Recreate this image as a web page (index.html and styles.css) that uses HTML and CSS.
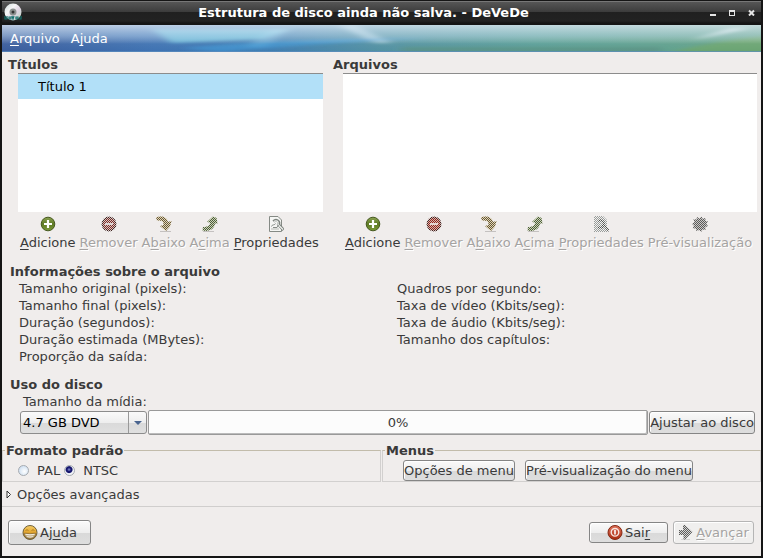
FILE: index.html
```html
<!DOCTYPE html>
<html lang="pt-BR">
<head>
<meta charset="utf-8">
<title>Estrutura de disco ainda não salva. - DeVeDe</title>
<link rel="stylesheet" href="styles.css">
</head>
<body>
<svg class="defs" aria-hidden="true">
  <defs>
    <linearGradient id="olive" x2="0" y2="1"><stop offset="0" stop-color="#8ba252"/><stop offset=".5" stop-color="#5e7a24"/><stop offset="1" stop-color="#7c9a38"/></linearGradient>
    <linearGradient id="red" x2="0" y2="1"><stop offset="0" stop-color="#df725b"/><stop offset="1" stop-color="#a92c10"/></linearGradient>
    <linearGradient id="gold" x2="0" y2="1"><stop offset="0" stop-color="#f6cf6a"/><stop offset=".5" stop-color="#e0a32c"/><stop offset="1" stop-color="#7c6434"/></linearGradient>
    <linearGradient id="disc" x2="1" y2="1"><stop offset="0" stop-color="#c9d6d6"/><stop offset=".35" stop-color="#f7f7f7"/><stop offset=".6" stop-color="#e2d5e4"/><stop offset="1" stop-color="#b5d9c0"/></linearGradient>
    <pattern id="dots" width="2" height="2" patternUnits="userSpaceOnUse"><path d="M0 0h1v1H0zM1 1h1v1H1z" fill="#fff"/></pattern>
    <mask id="stipple" maskUnits="userSpaceOnUse" x="0" y="0" width="16" height="16"><rect width="16" height="16" fill="url(#dots)"/></mask>
    <symbol id="add" viewBox="0 0 16 16"><circle cx="8" cy="8" r="6.8" fill="url(#olive)" stroke="#46591f"/><path d="M8 4v8M4 8h8" stroke="#fff" stroke-width="2.2"/></symbol>
    <symbol id="remove" viewBox="0 0 16 16"><circle cx="8" cy="8" r="7.2" fill="#d8c6c4"/><g mask="url(#stipple)"><circle cx="8" cy="8" r="7.5" fill="#3e2624"/><circle cx="8" cy="8" r="6" fill="#7e2b25"/></g><path d="M4 8h8" stroke="#ddd5d4" stroke-width="2"/></symbol>
    <symbol id="remove-red" viewBox="0 0 16 16"><circle cx="8" cy="8" r="7.2" fill="#d8b4ae"/><g mask="url(#stipple)"><circle cx="8" cy="8" r="7.500" fill="#3e2624"/><circle cx="8" cy="8" r="6" fill="#90251b"/></g><path d="M4 8h8" stroke="#e4d5d2" stroke-width="2"/></symbol>
    <symbol id="down" viewBox="0 0 16 16"><path d="M4 15.500h11" stroke="#c4c1c0"/><path d="M0 1.500C5-.8 11 .8 12 6l3.500-1L14 10.500 10 15 4 10l3.500-1C8 5 5 4 1 4.500z" fill="#e3d7b5"/><path d="M0 1.500C5-.8 11 .8 12 6l3.500-1L14 10.500 10 15 4 10l3.500-1C8 5 5 4 1 4.500z" fill="#65573a" mask="url(#stipple)"/></symbol>
    <symbol id="up" viewBox="0 0 16 16"><path d="M1 15.500h11" stroke="#c4c1c0"/><path d="M.5 14.500C7 16 12.500 13 13 7.500h2.500L14.500 2 11 .500 5 6l3 .5C8 10 5 11 1 11z" fill="#cbd6b6"/><path d="M.5 14.500C7 16 12.500 13 13 7.500h2.500L14.500 2 11 .500 5 6l3 .5C8 10 5 11 1 11z" fill="#4d5a3b" mask="url(#stipple)"/></symbol>
    <symbol id="props" viewBox="0 0 16 16"><path d="M1.500.5H10L13.500 4v11.500h-12z" fill="#f5f6f4" stroke="#858a85"/><path d="M3 13h8" stroke="#d6d8d4" stroke-width="2"/><path d="M5.500 5.500C8 3 12 5 10.500 8.500L15.500 14" fill="none" stroke="#7d837e" stroke-width="3"/><path d="M6 5.500C8 4 11 5 10 8.500l5 5" fill="none" stroke="#eff1ee" stroke-width="1.200"/><path d="M3.500 10.500C4 8 7 9.500 7.500 7.500M5 11.500h4L10.500 9" fill="none" stroke="#858b86"/></symbol>
    <symbol id="props-off" viewBox="0 0 16 16"><path d="M1 0h9l4 4v12H1z" fill="#f1f1f0"/><g mask="url(#stipple)"><path d="M1 0h9l4 4v12H1z" fill="#9a9c9a"/><path d="M5.500 5.500C8 3 12 5 10.500 8.500L16 15M5 11.500h4L10.500 9" fill="none" stroke="#4d504d" stroke-width="2"/></g></symbol>
    <symbol id="gear" viewBox="0 0 16 16"><path d="M5 1l2.200 1.500L9.500.5l1 2.200 3-.7-.2 2.800 2.700.7-1.700 2.300 1.700 2.400-2.700.8.2 2.900-2.900-.4-1.300 2.300-2.200-1.700L4.500 15l-.8-2.600-2.900-.1L2 9.700 0 7.700l2.400-1.500L1.500 3.300l3 .1z" fill="#cbcac9"/><path d="M5 1l2.200 1.500L9.500.5l1 2.200 3-.7-.2 2.800 2.700.7-1.700 2.300 1.700 2.400-2.700.8.2 2.900-2.900-.4-1.300 2.300-2.200-1.700L4.500 15l-.8-2.600-2.900-.1L2 9.700 0 7.700l2.400-1.500L1.500 3.300l3 .1z" fill="#5b5a58" mask="url(#stipple)"/></symbol>
    <symbol id="smile" viewBox="0 0 16 16"><circle cx="8" cy="7.500" r="7" fill="url(#gold)" stroke="#6f603d"/><path d="M2.500 8.200q5.500 1 11 0-.5 5-5.500 5t-5.500-5z" fill="#efe9dc" stroke="#8a6a2c" stroke-width=".8"/><path d="M3.500 10.500q4.500 1 9 0" fill="none" stroke="#a68c54" stroke-width=".7"/><path d="M3.500 5.500q1.500-1.500 3 0M9.500 5.500q1.500-1.500 3 0" fill="none" stroke="#b07d20"/></symbol>
    <symbol id="quit" viewBox="0 0 16 16"><circle cx="8" cy="7.500" r="7" fill="url(#red)" stroke="#842812"/><circle cx="8" cy="7.300" r="3.800" fill="none" stroke="#f7e5df" stroke-width="1.400"/><path d="M8 5v4.600" stroke="#fff" stroke-width="1.600"/></symbol>
    <symbol id="next" viewBox="0 0 16 16"><path d="M3 14.500h9" stroke="#d4d3d2"/><path d="M1 5h4V0h2l7.500 7L7 14.500H5.500V10H1z" fill="#d6d6d5"/><path d="M1 5h4V0h2l7.500 7L7 14.500H5.500V10H1z" fill="#5b5b5a" mask="url(#stipple)"/></symbol>
  </defs>
</svg>
<div class="window">
  <header class="titlebar">
    <svg class="logo" viewBox="0 0 18 18" aria-hidden="true"><circle cx="9" cy="9" r="8.500" fill="url(#disc)"/><circle cx="9" cy="9" r="3.500" fill="#8d9290"/><circle cx="9" cy="9" r="1.500" fill="#343434"/><path d="M1 13v3h2v-3M5 16h2v-2H5zM8 13l1 3 1-3M12 16h2v-2h-2zM15 16h2v-3" fill="none" stroke="#14716d" stroke-width="1.200"/></svg>
    <h1>Estrutura de disco ainda não salva. - DeVeDe</h1>
    <div class="controls">
      <button aria-label="Minimizar"><svg viewBox="0 0 7 7"><path d="M0 5h6v2H0z" fill="#e4e4e4"/></svg></button>
      <button aria-label="Maximizar"><svg viewBox="0 0 7 7"><path d="M0 1h6v6H0zM1 3v3h4V3z" fill="#e4e4e4" fill-rule="evenodd"/></svg></button>
      <button aria-label="Fechar"><svg viewBox="0 0 7 7"><path d="M1 1.500l5 5M6 1.500l-5 5" stroke="#e4e4e4" stroke-width="2"/></svg></button>
    </div>
  </header>
  <nav class="menubar">
    <svg class="waves" viewBox="0 0 760 27" preserveAspectRatio="none" aria-hidden="true">
      <defs>
        <linearGradient id="tone"><stop offset="0" stop-color="#3a5c9c"/><stop offset=".2" stop-color="#3e72b2"/><stop offset=".35" stop-color="#3f7cb0"/><stop offset=".5" stop-color="#5291a2"/><stop offset=".7" stop-color="#5a9e97"/><stop offset="1" stop-color="#64a287"/></linearGradient>
        <linearGradient id="sheen" x2="0" y2="1"><stop offset="0" stop-color="#e6eef8" stop-opacity=".75"/><stop offset=".4" stop-color="#d6e9f8" stop-opacity=".45"/><stop offset=".7" stop-color="#fff" stop-opacity=".05"/><stop offset="1" stop-color="#fff" stop-opacity="0"/></linearGradient>
        <filter id="soft" x="-10%" y="-50%" width="120%" height="200%"><feGaussianBlur stdDeviation="5 1.500"/></filter>
      </defs>
      <path d="M0 0h760v27H0z" fill="url(#tone)"/>
      <g filter="url(#soft)">
        <path d="M150 4h140l-30 10-90 4z" fill="#7ad8ea" opacity=".6"/>
        <path d="M270 4h18l-24 18h-20z" fill="#9ad9f2" opacity=".35"/>
        <path d="M336 0h18l36 18h-16z" fill="#e2f3fb" opacity=".5"/>
        <path d="M180 23Q300 12 430 13 320 18 220 27z" fill="#3f9bd8" opacity=".6"/>
        <path d="M400 22h260v5H400z" fill="#5a9082" opacity=".7"/>
        <path d="M690 15l60-12h-20z" fill="#fff" opacity=".7"/>
        <path d="M660 30Q700 18 770 10v20z" fill="#6ba472"/>
      </g>
      <path d="M0 0h760v27H0z" fill="url(#sheen)"/>
      <path d="M0 26.500h760" stroke="#5d8fc0" opacity=".7"/>
    </svg>
    <a href="#arquivo"><u>A</u>rquivo</a><a href="#ajuda">A<u>j</u>uda</a>
  </nav>
  <main>
    <div class="panes">
      <section class="pane">
        <h2>Títulos</h2>
        <ul class="list"><li>Título 1</li></ul>
        <div class="toolbar">
          <button><svg><use href="#add"/></svg><span><u>A</u>dicione</span></button>
          <button disabled><svg><use href="#remove"/></svg><span><u>R</u>emover</span></button>
          <button disabled><svg><use href="#down"/></svg><span>A<u>b</u>aixo</span></button>
          <button disabled><svg><use href="#up"/></svg><span>A<u>c</u>ima</span></button>
          <button><svg><use href="#props"/></svg><span><u>P</u>ropriedades</span></button>
        </div>
      </section>
      <section class="pane">
        <h2>Arquivos</h2>
        <ul class="list"></ul>
        <div class="toolbar">
          <button><svg><use href="#add"/></svg><span><u>A</u>dicione</span></button>
          <button disabled><svg><use href="#remove-red"/></svg><span><u>R</u>emover</span></button>
          <button disabled><svg><use href="#down"/></svg><span>A<u>b</u>aixo</span></button>
          <button disabled><svg><use href="#up"/></svg><span>A<u>c</u>ima</span></button>
          <button disabled><svg><use href="#props-off"/></svg><span><u>P</u>ropriedades</span></button>
          <button disabled><svg><use href="#gear"/></svg><span>Pré-visualização</span></button>
        </div>
      </section>
    </div>
    <section class="info">
      <h2>Informações sobre o arquivo</h2>
      <div class="facts">
        <ul><li>Tamanho original (pixels):</li><li>Tamanho final (pixels):</li><li>Duração (segundos):</li><li>Duração estimada (MBytes):</li><li>Proporção da saída:</li></ul>
        <ul><li>Quadros por segundo:</li><li>Taxa de vídeo (Kbits/seg):</li><li>Taxa de áudio (Kbits/seg):</li><li>Tamanho dos capítulos:</li></ul>
      </div>
    </section>
    <section class="usage">
      <h2>Uso do disco</h2>
      <label for="media">Tamanho da mídia:</label>
      <div class="usage-row">
        <div class="combo"><select id="media"><option>4.7 GB DVD</option></select></div>
        <div class="progress" role="progressbar" aria-label="Uso do disco" aria-valuenow="0">0%</div>
        <button class="btn">Ajustar ao disco</button>
      </div>
    </section>
    <div class="frames">
      <fieldset>
        <legend>Formato padrão</legend>
        <div class="radios">
          <input type="radio" name="format" id="pal"><label for="pal">PAL</label>
          <input type="radio" name="format" id="ntsc" checked><label for="ntsc">NTSC</label>
        </div>
      </fieldset>
      <fieldset>
        <legend>Menus</legend>
        <div class="menu-buttons">
          <button class="btn">Opções de menu</button>
          <button class="btn">Pré-visualização do menu</button>
        </div>
      </fieldset>
    </div>
    <details>
      <summary><svg class="arrow" viewBox="0 0 6 9" aria-hidden="true"><path d="M1 1v7l3.500-3.500z" fill="#fff" stroke="#333"/></svg>Opções avançadas</summary>
    </details>
    <footer>
      <button class="btn help"><svg><use href="#smile"/></svg><span>Aj<u>u</u>da</span></button>
      <button class="btn quit"><svg><use href="#quit"/></svg><span>Sai<u>r</u></span></button>
      <button class="btn next" disabled><svg><use href="#next"/></svg><span><u>A</u>vançar</span></button>
    </footer>
  </main>
</div>
</body>
</html>
```
FILE: styles.css
```css
* { box-sizing: border-box; }
body {
  margin: 0;
  background: #151515;
  color: #3a3a3a;
  font: 13px/17px "DejaVu Sans", sans-serif;
}
button, select { font: inherit; color: inherit; }
ul { list-style: none; margin: 0; padding: 0; }
h1, h2 { margin: 0; font-size: 13px; line-height: 17px; }
u { text-decoration-thickness: 1px; text-underline-offset: 2px; text-decoration-skip-ink: none; }
.defs { position: absolute; width: 0; height: 0; }

.window { display: flex; flex-direction: column; min-height: 100vh; padding: 0 2px 2px; }

.titlebar {
  display: flex;
  align-items: center;
  height: 25px;
  padding: 0 6px 2px 2px;
  border-top: 1px solid #151515;
  box-shadow: inset 0 1px #777;
  background: linear-gradient(#585858, #3c3c3c 11px, #202020 11px, #222 20px, #151515 22px);
}
.titlebar h1 { flex: 1; padding-right: 5px; text-align: center; color: #fff; }
.logo { width: 18px; height: 18px; }
.controls { display: flex; gap: 12px; }
.controls button { display: flex; padding: 0; border: 0; background: none; }
.controls svg { width: 7px; height: 7px; }

.menubar { position: relative; display: flex; gap: 11px; height: 27px; padding: 5px 8px; }
.menubar a { position: relative; color: #fff; text-decoration: none; }
.waves { position: absolute; inset: 0; width: 100%; height: 100%; }

main { flex: 1; display: flex; flex-direction: column; background: #f0edec; }

.panes { display: grid; grid-template-columns: 315fr 424fr; gap: 10px; padding: 4px 4px 0 6px; }
.pane { display: flex; flex-direction: column; min-width: 0; }
.list {
  height: 139px;
  margin-left: 10px;
  border-top: 1px solid #8c8c8c;
  background: #fff;
  color: #000;
}
.list li { padding: 4px 20px; background: #b2e0f8; }
.toolbar { display: flex; gap: 4px; margin-left: 12px; padding-top: 4px; }
.toolbar button {
  display: flex;
  flex-direction: column;
  align-items: center;
  gap: 2px;
  padding: 0;
  border: 0;
  background: none;
  white-space: nowrap;
}
.toolbar svg, .btn svg { width: 16px; height: 16px; }
button:disabled { color: #a5a3a2; text-shadow: 1px 1px #fff; }

.info { padding: 12px 8px 0; }
.facts { display: grid; grid-template-columns: 378fr 356fr; padding-left: 9px; }

.usage { padding: 11px 6px 0 8px; }
.usage label { display: block; padding-left: 13px; }
.usage-row { display: flex; align-items: center; gap: 1px; padding-left: 10px; }
.combo { position: relative; flex: 0 0 127px; }
.combo select {
  display: block;
  width: 100%;
  height: 23px;
  padding: 0 20px 0 2px;
  border: 1px solid #8c8c8c;
  border-radius: 3px;
  appearance: none;
  color: #000;
  background: linear-gradient(#fafafa, #eee 50%, #d9d9d9 51%, #e0e0e0);
}
.combo::before {
  content: "";
  position: absolute;
  top: 1px;
  bottom: 1px;
  right: 18px;
  border-left: 1px solid #999;
}
.combo::after {
  content: "";
  position: absolute;
  top: 10px;
  right: 5px;
  border: 4px solid transparent;
  border-top-color: #49648f;
  border-bottom: 0;
}
.progress {
  flex: 1;
  height: 25px;
  border: 1px solid #999;
  border-radius: 2px;
  box-shadow: inset -1px -1px #bbb;
  background: #fcfcfc;
  line-height: 23px;
  text-align: center;
}
.btn {
  display: inline-flex;
  align-items: center;
  justify-content: center;
  gap: 2px;
  height: 23px;
  padding: 0;
  border: 1px solid #858585;
  border-radius: 3px;
  box-shadow: inset 1px 1px #fff;
  background: linear-gradient(#fafafa, #eee 50%, #d9d9d9 51%, #dedede);
  white-space: nowrap;
}

.frames { display: grid; grid-template-columns: 1fr 1fr; gap: 1px; padding-top: 7px; }
fieldset {
  min-width: 0;
  margin: 0;
  padding: 0;
  border: 1px solid #d2d0cf;
  border-top-color: #c2bcab;
}
legend { padding: 0 1px; margin-left: 2px; font-weight: bold; }
.radios { display: flex; align-items: center; height: 22px; padding-left: 15px; }
.radios input {
  appearance: none;
  width: 11px;
  height: 11px;
  margin: 0;
  border: 1px solid #a5aab0;
  border-radius: 50%;
  background: radial-gradient(circle at 60% 60%, #fff, #bfd5ec);
}
.radios input:checked { background: radial-gradient(circle at 45% 40%, #8a94d8, #17176e 2px, #17176e 3px, #f3f5f8 4px); }
.radios label { padding: 0 4px 0 8px; }
.menu-buttons { display: flex; align-items: flex-end; gap: 10px; height: 22px; padding-left: 20px; }
.menu-buttons .btn { height: 21px; }

details { padding: 4px 4px 3px; border-bottom: 1px solid #d0cecd; }
summary { display: flex; align-items: center; gap: 5px; list-style: none; }
.arrow { width: 6px; height: 9px; }

footer { display: flex; align-items: center; gap: 5px; padding: 13px 7px 11px 6px; }
.help { width: 83px; height: 25px; margin-right: auto; }
.quit { width: 79px; height: 21px; }
.next { width: 81px; height: 23px; border-color: #b5b5b5; background: #f0efee; }
```
